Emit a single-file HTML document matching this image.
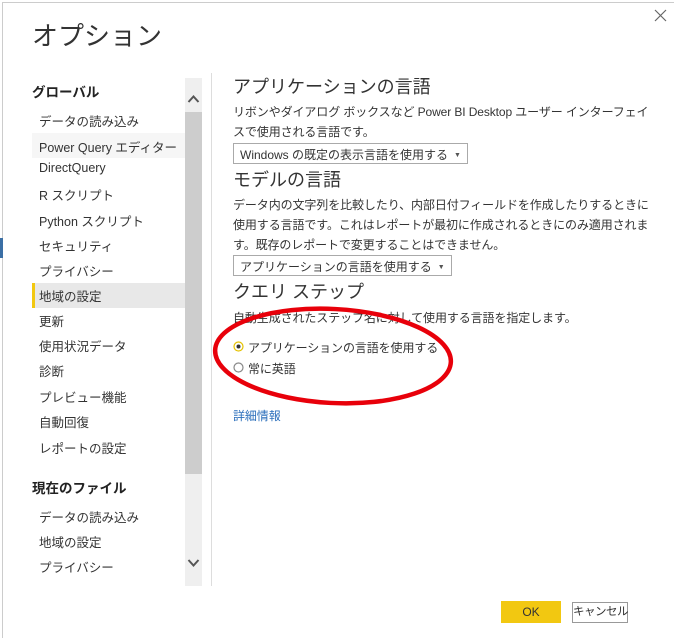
<!DOCTYPE html>
<html><head><meta charset="utf-8"><style>
*{margin:0;padding:0;box-sizing:border-box}
body{width:674px;height:638px;background:#fff;position:relative;overflow:hidden;font-family:"Liberation Sans","Noto Sans CJK JP",sans-serif;color:#333}
.a{position:absolute;white-space:nowrap}
.nav{font-size:12.5px;color:#333;left:39px}
.h{font-size:18px;color:#333;left:233px}
.t{font-size:12px;color:#333;left:233px;letter-spacing:-0.1px}
.dd{position:absolute;border:1px solid #aaa;height:21px;font-size:12px;padding:2px 0 0 6px;color:#333;white-space:nowrap;overflow:hidden}
.dd span{font-size:7px;margin-left:6px;color:#555;vertical-align:2px}
</style></head><body>
<div class="a" style="left:2px;top:2px;width:672px;height:1px;background:#ccc"></div>
<div class="a" style="left:2px;top:2px;width:1px;height:636px;background:#ccc"></div>
<div class="a" style="left:0;top:238px;width:3px;height:20px;background:#3b6fa5"></div>
<div class="a" style="left:32px;top:16px;font-size:26px;color:#333">オプション</div>
<svg class="a" style="left:654px;top:9px" width="13" height="13"><path d="M1 1L12 12M12 1L1 12" stroke="#666" stroke-width="1.2"/></svg>

<div class="a" style="left:32px;top:133px;width:153px;height:25px;background:#f6f6f6"></div>
<div class="a" style="left:32px;top:283px;width:153px;height:25px;background:#e8e8e8"></div>
<div class="a" style="left:32px;top:283px;width:3px;height:25px;background:#f2c811"></div>
<div class="a" style="left:32px;top:81px;font-size:13.5px;font-weight:bold;color:#222">グローバル</div>
<div class="a nav" style="top:111px">データの読み込み</div>
<div class="a nav" style="top:137px">Power Query エディター</div>
<div class="a nav" style="top:161px">DirectQuery</div>
<div class="a nav" style="top:185px">R スクリプト</div>
<div class="a nav" style="top:211px">Python スクリプト</div>
<div class="a nav" style="top:236px">セキュリティ</div>
<div class="a nav" style="top:261px">プライバシー</div>
<div class="a nav" style="top:286px">地域の設定</div>
<div class="a nav" style="top:311px">更新</div>
<div class="a nav" style="top:336px">使用状況データ</div>
<div class="a nav" style="top:361px">診断</div>
<div class="a nav" style="top:387px">プレビュー機能</div>
<div class="a nav" style="top:412px">自動回復</div>
<div class="a nav" style="top:438px">レポートの設定</div>
<div class="a" style="left:32px;top:477px;font-size:13.5px;font-weight:bold;color:#222">現在のファイル</div>
<div class="a nav" style="top:507px">データの読み込み</div>
<div class="a nav" style="top:532px">地域の設定</div>
<div class="a nav" style="top:557px">プライバシー</div>

<div class="a" style="left:185px;top:78px;width:17px;height:508px;background:#efefef"></div>
<div class="a" style="left:185px;top:112px;width:17px;height:362px;background:#cdcdcd"></div>
<svg class="a" style="left:187px;top:94px" width="13" height="10"><path d="M1.5 8L6.5 2.5L11.5 8" stroke="#555" stroke-width="2" fill="none"/></svg>
<svg class="a" style="left:187px;top:558px" width="13" height="10"><path d="M1.5 2L6.5 7.5L11.5 2" stroke="#555" stroke-width="2" fill="none"/></svg>
<div class="a" style="left:211px;top:73px;width:1px;height:513px;background:#ddd"></div>

<div class="a h" style="top:73px">アプリケーションの言語</div>
<div class="a t" style="top:103px">リボンやダイアログ ボックスなど Power BI Desktop ユーザー インターフェイ</div>
<div class="a t" style="top:123px">スで使用される言語です。</div>
<div class="dd" style="left:233px;top:143px;width:235px">Windows の既定の表示言語を使用する<span>▼</span></div>
<div class="a h" style="top:166px">モデルの言語</div>
<div class="a t" style="top:196px">データ内の文字列を比較したり、内部日付フィールドを作成したりするときに</div>
<div class="a t" style="top:216px">使用する言語です。これはレポートが最初に作成されるときにのみ適用されま</div>
<div class="a t" style="top:236px">す。既存のレポートで変更することはできません。</div>
<div class="dd" style="left:233px;top:255px;width:219px">アプリケーションの言語を使用する<span>▼</span></div>
<div class="a h" style="top:278px">クエリ ステップ</div>
<div class="a t" style="top:309px">自動生成されたステップ名に対して使用する言語を指定します。</div>
<svg class="a" style="left:233px;top:341px" width="11" height="11"><circle cx="5.5" cy="5.5" r="4.5" fill="#fff" stroke="#e5c100" stroke-width="1.2"/><circle cx="5.5" cy="5.5" r="2" fill="#333"/></svg>
<div class="a t" style="left:248px;top:339px">アプリケーションの言語を使用する</div>
<svg class="a" style="left:233px;top:362px" width="11" height="11"><circle cx="5.5" cy="5.5" r="4.5" fill="#fff" stroke="#888" stroke-width="1.2"/></svg>
<div class="a t" style="left:248px;top:360px">常に英語</div>
<div class="a t" style="top:407px;color:#2a6ebb">詳細情報</div>

<svg class="a" style="left:0;top:0" width="674" height="638"><ellipse cx="333" cy="356" rx="118" ry="47" transform="rotate(3 333 356)" fill="none" stroke="#e8000a" stroke-width="4.5"/></svg>

<div class="a" style="left:501px;top:601px;width:60px;height:22px;background:#f2c811;font-size:12px;text-align:center;line-height:22px;color:#333">OK</div>
<div class="a" style="left:572px;top:602px;width:56px;height:21px;border:1px solid #999;font-size:11.5px;text-align:center;line-height:19px;color:#333;letter-spacing:-0.5px">キャンセル</div>
</body></html>
